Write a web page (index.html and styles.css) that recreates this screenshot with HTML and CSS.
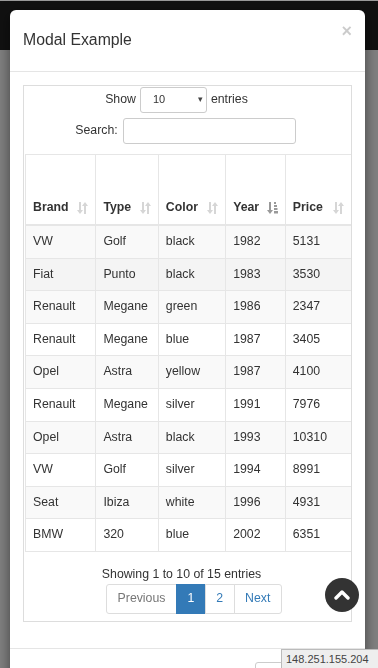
FILE: index.html
```html
<!DOCTYPE html>
<html lang="en">
<head>
    <meta charset="UTF-8">
    <meta name="viewport" content="width=device-width, initial-scale=1.0">
    <title>Modal Example</title>
    <link rel="stylesheet" href="styles.css">
</head>
<body>
    <div class="navbar"></div>
    <div class="page"></div>

    <div class="modal">
        <div class="modal-content">
            <div class="modal-header">
                <h4 class="modal-title">Modal Example</h4>
                <span class="close">&times;</span>
            </div>
            <div class="modal-body">
                <div class="dt-wrapper">
                    <div class="dt-length">
                        <label>Show</label>
                        <div class="select-box"><span>10</span><span class="caret">&#9662;</span></div>
                        <label>entries</label>
                    </div>
                    <div class="dt-filter">
                        <label>Search:</label>
                        <div class="search-box"></div>
                    </div>
                    <table class="dt-table">
                        <thead>
                            <tr id="head-row"></tr>
                        </thead>
                        <tbody id="rows"></tbody>
                    </table>
                    <div class="dt-info">Showing 1 to 10 of 15 entries</div>
                    <ul class="pagination">
                        <li class="disabled">Previous</li>
                        <li class="active">1</li>
                        <li>2</li>
                        <li>Next</li>
                    </ul>
                </div>
            </div>
            <div class="modal-footer">
                <button class="btn">Close</button>
            </div>
        </div>
    </div>

    <div class="scroll-top">
        <svg width="16" height="12" viewBox="0 0 16 12"><path d="M2 9 L8 3 L14 9" fill="none" stroke="#fff" stroke-width="3.4" stroke-linecap="round" stroke-linejoin="round"/></svg>
    </div>
    <div class="ip-tip">148.251.155.204</div>

    <script>
        const columns = ['Brand', 'Type', 'Color', 'Year', 'Price'];
        const cars = [
            ['VW', 'Golf', 'black', 1982, 5131],
            ['Fiat', 'Punto', 'black', 1983, 3530],
            ['Renault', 'Megane', 'green', 1986, 2347],
            ['Renault', 'Megane', 'blue', 1987, 3405],
            ['Opel', 'Astra', 'yellow', 1987, 4100],
            ['Renault', 'Megane', 'silver', 1991, 7976],
            ['Opel', 'Astra', 'black', 1993, 10310],
            ['VW', 'Golf', 'silver', 1994, 8991],
            ['Seat', 'Ibiza', 'white', 1996, 4931],
            ['BMW', '320', 'blue', 2002, 6351]
        ];

        const sortIcon = '<svg width="11" height="12" viewBox="0 0 11 12"><path d="M3 0 V9" stroke="currentColor" stroke-width="2"/><path d="M0 8 L3 12 L6 8 Z" fill="currentColor"/><path d="M8 12 V3" stroke="currentColor" stroke-width="2"/><path d="M5 4 L8 0 L11 4 Z" fill="currentColor"/></svg>';
        const sortedIcon = '<svg width="11" height="12" viewBox="0 0 11 12"><path d="M3 0 V9" stroke="currentColor" stroke-width="2"/><path d="M0 8 L3 12 L6 8 Z" fill="currentColor"/><rect x="7" y="0" width="2" height="2" fill="currentColor"/><rect x="7" y="3" width="3" height="2" fill="currentColor"/><rect x="7" y="6" width="3.5" height="2" fill="currentColor"/><rect x="7" y="9" width="4" height="2.5" fill="currentColor"/></svg>';

        const headRow = document.getElementById('head-row');
        columns.forEach(name => {
            const th = document.createElement('th');
            const sorted = name === 'Year';
            th.innerHTML = '<div class="th-inner"><span>' + name + '</span><span class="sort-icon' + (sorted ? ' sorted' : '') + '">' + (sorted ? sortedIcon : sortIcon) + '</span></div>';
            headRow.appendChild(th);
        });

        const tbody = document.getElementById('rows');
        cars.forEach((car, i) => {
            const tr = document.createElement('tr');
            if (i === 1) tr.className = 'hover';
            car.forEach(value => {
                const td = document.createElement('td');
                td.textContent = value;
                tr.appendChild(td);
            });
            tbody.appendChild(tr);
        });
    </script>
</body>
</html>
```

FILE: styles.css
```css
body {
    margin: 0;
    font-family: "Liberation Sans", Arial, sans-serif;
    font-size: 12.3px;
    line-height: 17.6px;
    color: #333;
    background-color: #808080;
    height: 668px;
    overflow: hidden;
}
.navbar {
    height: 49px;
    background-color: #111;
    border-top: 1px solid #9a9a9a;
}
.page {
    height: 618px;
    background-color: #808080;
}
.modal {
    position: fixed;
    top: 10px;
    left: 10px;
    right: 13px;
}
.modal-content {
    background-color: #fff;
    border-radius: 6px;
    box-shadow: 0 4px 13px rgba(0, 0, 0, 0.5);
}
.modal-header {
    display: flex;
    justify-content: space-between;
    align-items: flex-start;
    padding: 20px 13px 0 13px;
    height: 41px;
    border-bottom: 1px solid #e5e5e5;
}
.modal-title {
    margin: 0;
    font-size: 15.8px;
    font-weight: normal;
    line-height: 20px;
}
.close {
    font-size: 18px;
    font-weight: bold;
    color: #000;
    opacity: 0.2;
    line-height: 16px;
    margin-top: -7px;
    margin-right: 0;
}
.modal-body {
    padding: 13px 13px 26px 13px;
}
.dt-wrapper {
    border: 1px solid #ddd;
    display: flex;
    flex-direction: column;
    align-items: center;
    padding-top: 1px;
    padding-bottom: 7px;
}
.dt-length {
    display: flex;
    align-items: center;
    gap: 4px;
    height: 26px;
    margin-right: 22px;
}
.select-box {
    width: 50px;
    height: 24px;
    border: 1px solid #ccc;
    border-radius: 3px;
    display: flex;
    align-items: center;
    justify-content: space-between;
    padding: 0 3px 0 12px;
    font-size: 11px;
}
.caret {
    font-size: 9px;
    color: #444;
}
.dt-filter {
    display: flex;
    align-items: center;
    gap: 5px;
    margin-top: 5px;
    height: 26px;
    margin-left: -4px;
}
.search-box {
    width: 171px;
    height: 24px;
    border: 1px solid #ccc;
    border-radius: 3px;
}
.dt-table {
    align-self: stretch;
    border-collapse: collapse;
    margin-top: 10px;
    margin-left: 1px;
}
.dt-table th,
.dt-table td {
    border: 1px solid #e6e6e6;
    padding: 7px 7px;
    text-align: left;
    line-height: 17.6px;
    white-space: nowrap;
}
.dt-table th {
    height: 55px;
    vertical-align: bottom;
    font-weight: bold;
    border-top: 1px solid #e6e6e6;
    border-bottom: 2px solid #e6e6e6;
}
.dt-table th:nth-child(1) { width: 57px; }
.dt-table th:nth-child(2) { width: 48px; }
.dt-table th:nth-child(3) { width: 54px; }
.dt-table th:nth-child(4) { width: 46px; }
.dt-table th:nth-child(5) { width: 53px; }
.dt-table th:last-child,
.dt-table td:last-child {
    border-right: none;
}
.th-inner {
    display: flex;
    justify-content: space-between;
    align-items: center;
}
.sort-icon {
    color: #d6d6d6;
    display: flex;
}
.sort-icon.sorted {
    color: #999;
}
.dt-table tbody tr:nth-child(odd) {
    background-color: #f9f9f9;
}
.dt-table tbody tr.hover {
    background-color: #f4f4f4;
}
.dt-info {
    margin-top: 14px;
    margin-right: 12px;
    line-height: 17px;
}
.pagination {
    display: flex;
    list-style: none;
    margin: 1px 0 0 14px;
    padding: 0;
}
.pagination li {
    padding: 5px 10.5px;
    line-height: 17.6px;
    border: 1px solid #ddd;
    margin-left: -1px;
    color: #337ab7;
    background-color: #fff;
}
.pagination li:first-child {
    border-radius: 3px 0 0 3px;
}
.pagination li:last-child {
    border-radius: 0 3px 3px 0;
}
.pagination li.disabled {
    color: #777;
}
.pagination li.active {
    background-color: #337ab7;
    border-color: #337ab7;
    color: #fff;
}
.modal-footer {
    border-top: 1px solid #e5e5e5;
    padding: 13px 13px 0 245px;
    height: 40px;
}
.btn {
    font-family: inherit;
    font-size: 12.3px;
    padding: 5px 10px;
    background-color: #fff;
    border: 1px solid #ccc;
    border-radius: 3px;
    color: #333;
}
.scroll-top {
    position: fixed;
    left: 325px;
    top: 578px;
    width: 34px;
    height: 34px;
    border-radius: 50%;
    background-color: #333;
    display: flex;
    align-items: center;
    justify-content: center;
}
.ip-tip {
    position: fixed;
    left: 281px;
    top: 649px;
    padding: 2px 4px 0 4px;
    font-size: 11px;
    line-height: 15px;
    color: #444;
    background-color: #eee;
    border: 1px solid #bbb;
    border-right: none;
    border-bottom: none;
    width: 90px;
    height: 17px;
}
```
